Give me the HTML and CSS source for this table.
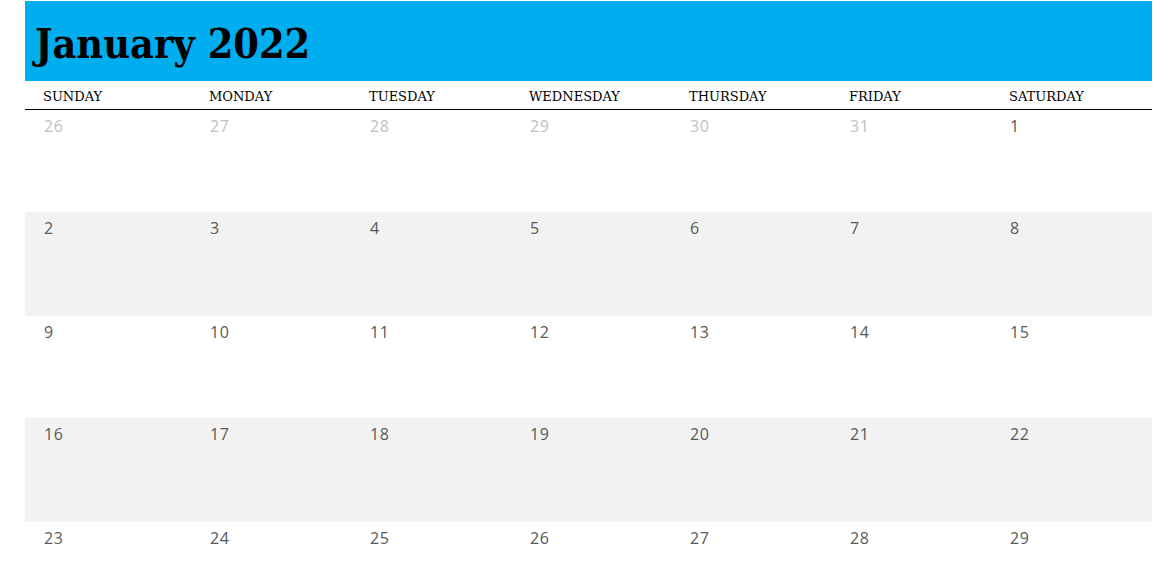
FILE: index.html
```html
<!DOCTYPE html>
<html>
<head>
<meta charset="utf-8">
<link rel="stylesheet" href="styles.css">
</head>
<body>
<div class="cal">
  <div class="title">January 2022</div>
  <div class="heads">
    <div class="h">SUNDAY</div><div class="h">MONDAY</div><div class="h">TUESDAY</div><div class="h">WEDNESDAY</div><div class="h">THURSDAY</div><div class="h">FRIDAY</div><div class="h">SATURDAY</div>
  </div>
  <div class="row">
    <div class="d off">26</div><div class="d off">27</div><div class="d off">28</div><div class="d off">29</div><div class="d off">30</div><div class="d off">31</div><div class="d">1</div>
  </div>
  <div class="row alt">
    <div class="d">2</div><div class="d">3</div><div class="d">4</div><div class="d">5</div><div class="d">6</div><div class="d">7</div><div class="d">8</div>
  </div>
  <div class="row">
    <div class="d">9</div><div class="d">10</div><div class="d">11</div><div class="d">12</div><div class="d">13</div><div class="d">14</div><div class="d">15</div>
  </div>
  <div class="row alt">
    <div class="d">16</div><div class="d">17</div><div class="d">18</div><div class="d">19</div><div class="d">20</div><div class="d">21</div><div class="d">22</div>
  </div>
  <div class="row last">
    <div class="d">23</div><div class="d">24</div><div class="d">25</div><div class="d">26</div><div class="d">27</div><div class="d">28</div><div class="d">29</div>
  </div>
</div>
</body>
</html>
```
FILE: styles.css
```css
html, body { margin: 0; padding: 0; background: #fff; overflow: hidden; }
.cal { margin: 1px 0 0 25px; width: 1127px; }
.title {
  background: #00adef;
  height: 80px;
  box-sizing: border-box;
  padding: 15px 0 0 10px;
  font-family: "DejaVu Serif Condensed", "DejaVu Serif", serif;
  font-stretch: condensed;
  font-weight: bold;
  font-size: 41px;
  line-height: 56px;
  color: #000;
}
.heads, .row { display: grid; grid-template-columns: 166px repeat(6, 160px); }
.heads { height: 28px; border-bottom: 1px solid #000; }
.h {
  padding: 8px 0 0 18px;
  font-family: "DejaVu Serif", serif;
  font-size: 13px;
  line-height: 16px;
  color: #000;
}
.row { height: 102px; }
.row.alt { height: 104px; background: #f2f2f2; }
.row.last { height: 54px; }
.d {
  padding: 6px 0 0 19px;
  font-family: "Open Sans", sans-serif;
  font-size: 16px;
  line-height: 20px;
  color: #595959;
  letter-spacing: 0.6px;
}
.d.off { color: #bfbfbf; }
```
